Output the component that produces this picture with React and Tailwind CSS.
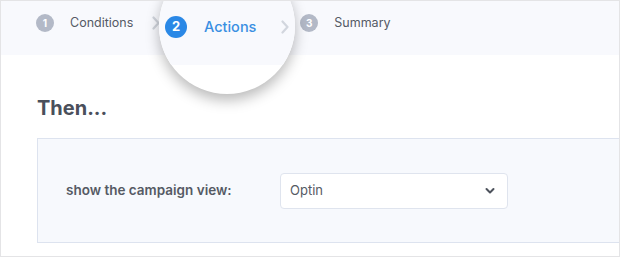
import React from 'react'

function Step({ n, label }) {
  return (
    <div className="flex items-center">
      <span className="flex h-[18px] w-[18px] items-center justify-center rounded-full bg-[#b3b9c7] text-[10px] font-bold text-white">{n}</span>
      <span className="ml-[16px] text-[12.5px] text-[#555a65]">{label}</span>
    </div>
  )
}

function Chevron({ className }) {
  return (
    <svg className={className} viewBox="0 0 8 14" fill="none">
      <path d="M1.5 1.5 L6.5 7 L1.5 12.5" stroke="currentColor" strokeWidth="2.2" strokeLinecap="round" strokeLinejoin="round" />
    </svg>
  )
}

export default function App() {
  return (
    <div className="relative h-[257px] w-[620px] overflow-hidden border border-[#e4e4e6] bg-white font-['Inter',sans-serif]">
      {/* steps bar */}
      <div className="flex h-[54px] items-start bg-[#f8f9fd] pl-[35px] pt-[13px]">
        <Step n="1" label="Conditions" />
        <Chevron className="ml-[19px] mt-[2px] h-[14px] w-[8px] text-[#cfd3db]" />
        <div className="w-[140px]" />
        <Step n="3" label="Summary" />
      </div>

      {/* magnifier */}
      <div className="absolute left-[158px] top-[-43px] h-[136px] w-[136px] overflow-hidden rounded-full bg-white shadow-[0_6px_14px_rgba(0,0,0,0.28)]">
        <div className="absolute left-0 top-0 h-[107px] w-full bg-[#f8f9fd]" />
        <div className="absolute left-[6px] top-[58px] flex items-center">
          <span className="flex h-[22px] w-[22px] items-center justify-center rounded-full bg-[#2a88e6] text-[13px] font-bold text-white">2</span>
          <span className="ml-[17px] text-[14.5px] font-medium text-[#3a8fe2]">Actions</span>
        </div>
        <Chevron className="absolute left-[122px] top-[62px] h-[14px] w-[8px] text-[#d2d6de]" />
      </div>

      {/* content */}
      <div className="pl-[36px] pt-[41px]">
        <h2 className="text-[20px] font-bold leading-[24px] text-[#4a4f5b]">Then...</h2>
        <div className="mt-[18px] flex h-[105px] items-center border border-r-0 border-[#dde3ef] bg-[#f7f9fd] pl-[28px]">
          <span className="w-[214px] text-[13.5px] font-semibold text-[#555a64]">show the campaign view:</span>
          <div className="flex h-[36px] w-[228px] items-center justify-between rounded-[4px] border border-[#dfe4ee] bg-white pl-[9px] pr-[12px]">
            <span className="text-[13px] text-[#555a64]">Optin</span>
            <svg className="h-[8px] w-[10px] text-[#4d525c]" viewBox="0 0 10 8" fill="none">
              <path d="M1.5 2 L5 5.5 L8.5 2" stroke="currentColor" strokeWidth="2" strokeLinecap="round" strokeLinejoin="round" />
            </svg>
          </div>
        </div>
      </div>
    </div>
  )
}
